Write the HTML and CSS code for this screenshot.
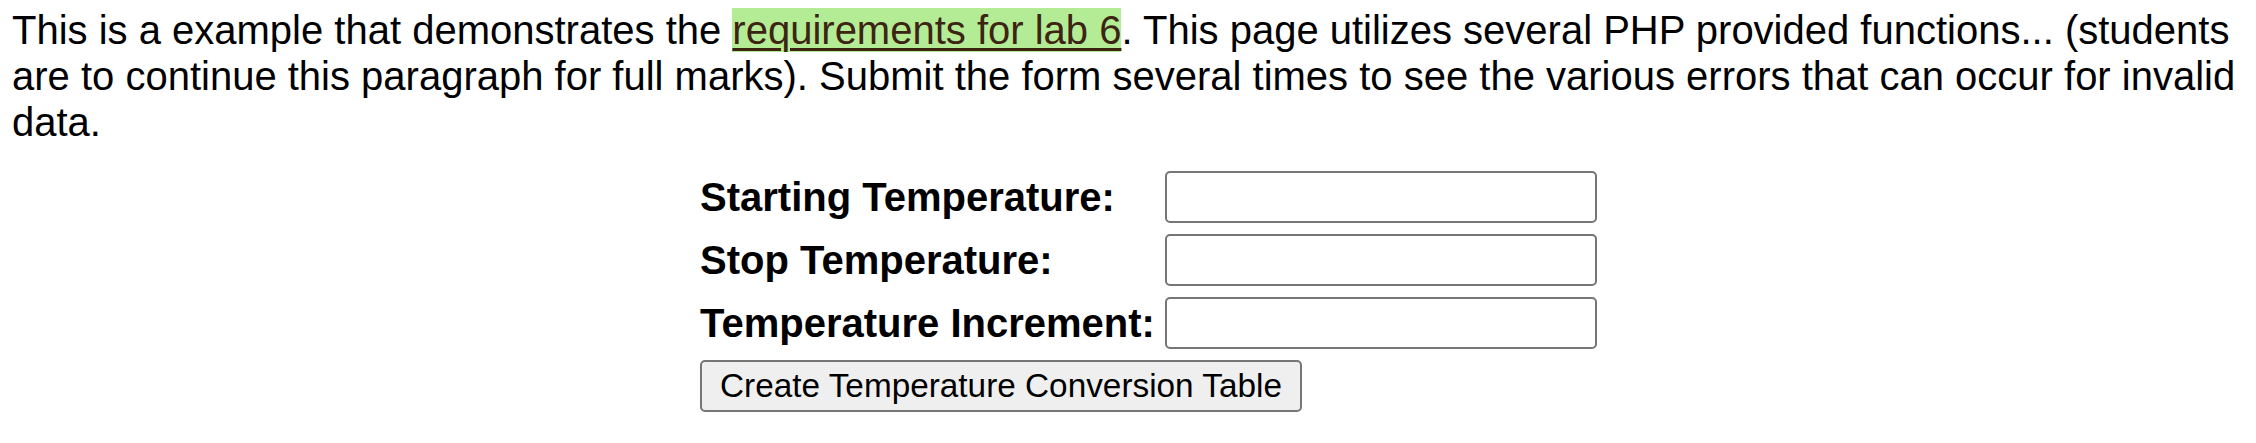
FILE: index.html
```html
<!DOCTYPE html>
<html lang="en">
<head>
<meta charset="utf-8">
<title>Lab 6</title>
<link rel="stylesheet" href="styles.css">
</head>
<body>
<p class="intro">This is a example that demonstrates the <a class="req-link" href="#">requirements for lab 6</a>. This page utilizes several PHP provided functions... (students are to continue this paragraph for full marks). Submit the form several times to see the various errors that can occur for invalid data.</p>
<form class="temp-form">
  <label class="field-label" for="start">Starting Temperature:</label>
  <input class="field-input" type="text" id="start" name="start">
  <label class="field-label" for="stop">Stop Temperature:</label>
  <input class="field-input" type="text" id="stop" name="stop">
  <label class="field-label" for="incr">Temperature Increment:</label>
  <input class="field-input" type="text" id="incr" name="incr">
  <div class="actions">
    <button class="submit-btn" type="button">Create Temperature Conversion Table</button>
  </div>
</form>
</body>
</html>
```
FILE: styles.css
```css
html, body {
  margin: 0;
  background: #ffffff;
}
body {
  padding: 7px 12px 0 12px;
  font-family: "Liberation Sans", Arial, sans-serif;
  color: #000000;
}
.intro {
  margin: 0;
  font-size: 40px;
  line-height: 46px;
}
.req-link {
  color: #3d2412;
  background: #b4ec96;
  text-decoration: underline;
  text-decoration-thickness: 3px;
  text-underline-offset: 4px;
}
.temp-form {
  display: grid;
  grid-template-columns: max-content 432px;
  column-gap: 10px;
  row-gap: 11px;
  align-items: center;
  margin: 26px 0 0 688px;
  width: max-content;
}
.field-label {
  font-size: 40px;
  font-weight: bold;
  line-height: 46px;
}
.field-input {
  box-sizing: border-box;
  width: 432px;
  height: 52px;
  margin: 0;
  border: 2.5px solid #767676;
  border-radius: 5px;
  background: #ffffff;
  font-family: "Liberation Sans", Arial, sans-serif;
  font-size: 33px;
  padding: 2px 6px;
}
.actions {
  grid-column: 1 / span 2;
}
.submit-btn {
  box-sizing: border-box;
  height: 52px;
  margin: 0;
  padding: 0 18px;
  border: 2.5px solid #767676;
  border-radius: 5px;
  background: #efefef;
  color: #000000;
  font-family: "Liberation Sans", Arial, sans-serif;
  font-size: 33.33px;
  line-height: 1;
}
```
